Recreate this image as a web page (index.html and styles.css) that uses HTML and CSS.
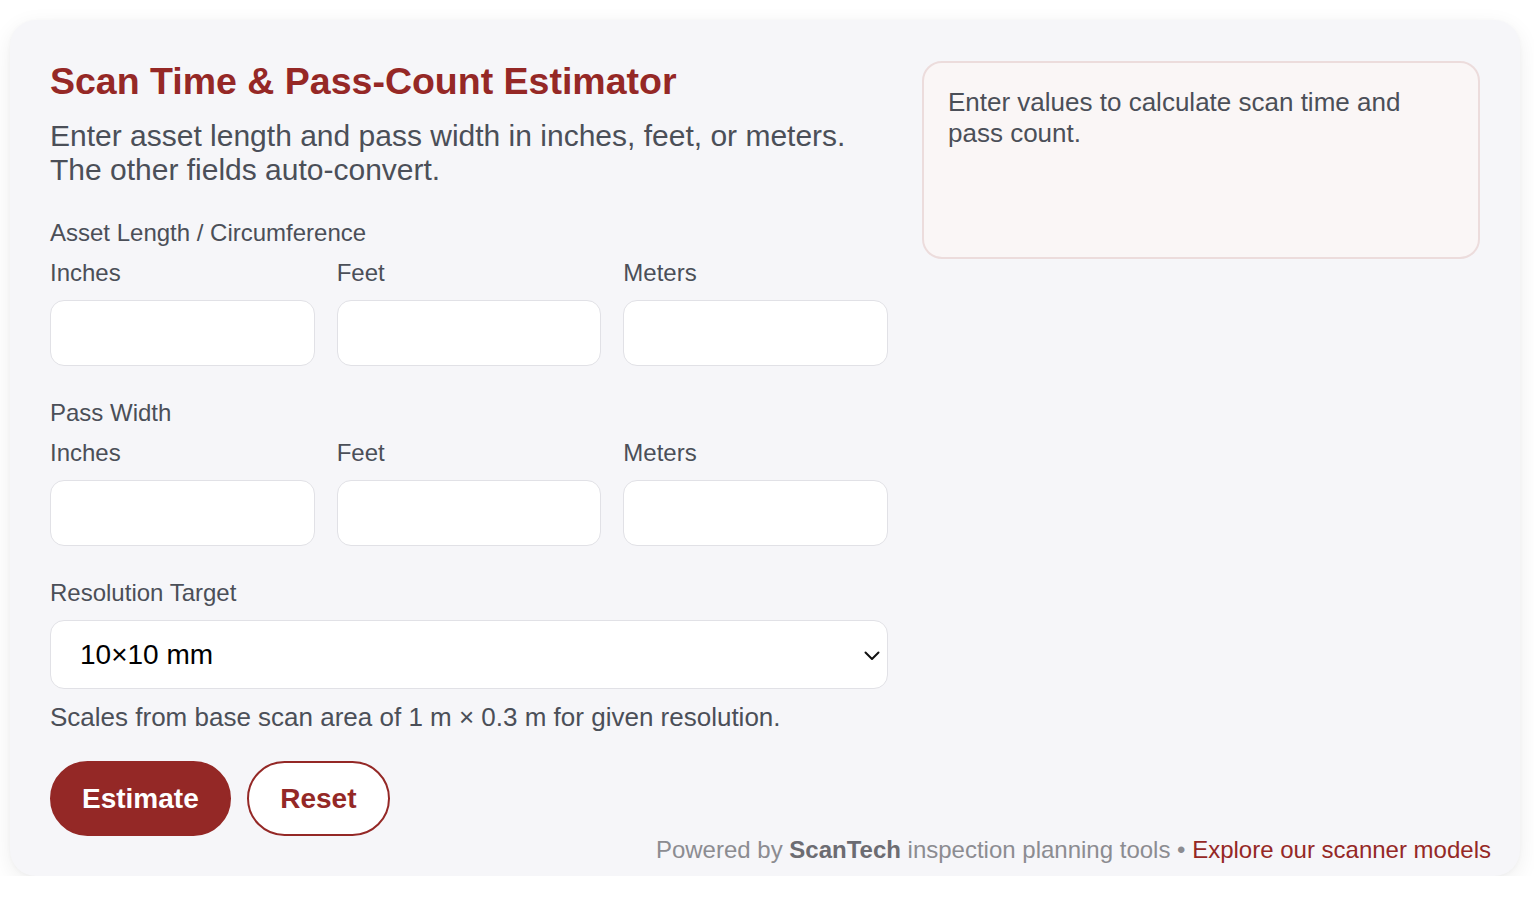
FILE: index.html
```html
<!DOCTYPE html>
<html lang="en">
<head>
<meta charset="utf-8">
<title>Scan Time &amp; Pass-Count Estimator</title>
<link rel="stylesheet" href="styles.css">
</head>
<body>
<div class="card">
  <div class="layout">
    <div class="form-col">
      <h1 class="title">Scan Time &amp; Pass-Count Estimator</h1>
      <p class="subtitle">Enter asset length and pass width in inches, feet, or meters. The other fields auto-convert.</p>

      <div class="group">
        <div class="group-label">Asset Length / Circumference</div>
        <div class="unit-grid">
          <label class="unit"><span class="unit-label">Inches</span><input class="field" type="text"></label>
          <label class="unit"><span class="unit-label">Feet</span><input class="field" type="text"></label>
          <label class="unit"><span class="unit-label">Meters</span><input class="field" type="text"></label>
        </div>
      </div>

      <div class="group">
        <div class="group-label">Pass Width</div>
        <div class="unit-grid">
          <label class="unit"><span class="unit-label">Inches</span><input class="field" type="text"></label>
          <label class="unit"><span class="unit-label">Feet</span><input class="field" type="text"></label>
          <label class="unit"><span class="unit-label">Meters</span><input class="field" type="text"></label>
        </div>
      </div>

      <div class="group">
        <div class="group-label">Resolution Target</div>
        <div class="select-wrap">
          <select class="select">
            <option>10×10 mm</option>
            <option>5×5 mm</option>
            <option>2×2 mm</option>
          </select>
          <svg class="chevron" width="16" height="10" viewBox="0 0 16 10"><path d="M1.5 1.5 L8 8 L14.5 1.5" fill="none" stroke="#111" stroke-width="2" stroke-linecap="round" stroke-linejoin="round"/></svg>
        </div>
        <p class="help">Scales from base scan area of 1 m × 0.3 m for given resolution.</p>
      </div>

      <div class="actions">
        <button class="btn btn-primary" type="button">Estimate</button>
        <button class="btn btn-outline" type="button">Reset</button>
      </div>
    </div>

    <div class="result-col">
      <div class="result-box">Enter values to calculate scan time and pass count.</div>
    </div>
  </div>
  <div class="footer">Powered by <strong>ScanTech</strong> inspection planning tools • <a href="#" class="footer-link">Explore our scanner models</a></div>
</div>
</body>
</html>
```

FILE: styles.css
```css
* { box-sizing: border-box; }

html, body {
  margin: 0;
  padding: 0;
  background: #ffffff;
}

body {
  font-family: "Liberation Sans", Arial, Helvetica, sans-serif;
  color: #4b4f58;
  padding: 20px 14px 0 10px;
}

.card {
  background: #f6f6f9;
  border-radius: 26px;
  box-shadow: 0 6px 22px rgba(0, 0, 0, 0.07), 0 1px 4px rgba(0, 0, 0, 0.03);
  padding: 40px 40px 12px 40px;
}

.layout {
  display: grid;
  grid-template-columns: 838px 1fr;
  column-gap: 34px;
}

.title {
  margin: 0;
  font-size: 37.5px;
  line-height: 42px;
  font-weight: 700;
  color: #952826;
}

.subtitle {
  margin: 17px 0 0 0;
  font-size: 30px;
  line-height: 34px;
  color: #4b4f58;
}

.group {
  margin-top: 33px;
}

.group:first-of-type {
  margin-top: 32px;
}

.group-label {
  font-size: 24px;
  line-height: 28px;
  color: #4b4f58;
}

.unit-grid {
  display: grid;
  grid-template-columns: repeat(3, 1fr);
  column-gap: 22px;
  margin-top: 12px;
}

.unit {
  display: flex;
  flex-direction: column;
}

.unit-label {
  font-size: 24px;
  line-height: 28px;
  color: #4b4f58;
}

.field {
  margin-top: 13px;
  height: 66px;
  width: 100%;
  border: 1.5px solid #e1e1e6;
  border-radius: 14px;
  background: #ffffff;
  font-family: inherit;
  font-size: 26px;
  padding: 0 20px;
  outline: none;
}

.select-wrap {
  position: relative;
  margin-top: 13px;
}

.select {
  display: block;
  width: 100%;
  height: 69px;
  -webkit-appearance: none;
  appearance: none;
  border: 1.5px solid #e1e1e6;
  border-radius: 14px;
  background: #ffffff;
  font-family: "Liberation Sans", Arial, Helvetica, sans-serif;
  font-size: 28px;
  color: #000000;
  padding: 0 60px 0 29px;
  outline: none;
}

.chevron {
  position: absolute;
  right: 8px;
  top: 50%;
  margin-top: -4px;
  width: 16px;
  height: 10px;
}

.help {
  margin: 13px 0 0 0;
  font-size: 26px;
  line-height: 30px;
  color: #4b4f58;
}

.actions {
  display: flex;
  gap: 16px;
  margin-top: 29px;
}

.btn {
  height: 75px;
  border-radius: 38px;
  font-family: "Liberation Sans", Arial, Helvetica, sans-serif;
  font-size: 28px;
  font-weight: 700;
  padding: 0 30px;
  cursor: pointer;
}

.btn-primary {
  background: #942826;
  color: #ffffff;
  border: 2px solid #942826;
}

.btn-outline {
  background: #ffffff;
  color: #942826;
  border: 2px solid #942826;
  padding: 0 31.5px;
}

.result-col {
  padding-top: 1px;
}

.result-box {
  min-height: 198px;
  background: #faf6f6;
  border: 2px solid #ecdcdc;
  border-radius: 20px;
  padding: 24px 24px;
  font-size: 26px;
  line-height: 31px;
  color: #4b4f58;
}

.footer {
  margin-right: -11px;
  text-align: right;
  font-size: 24px;
  line-height: 28px;
  color: #8c8c91;
}

.footer strong {
  color: #6c6c72;
  font-weight: 700;
}

.footer-link {
  color: #952826;
  text-decoration: none;
}
```
